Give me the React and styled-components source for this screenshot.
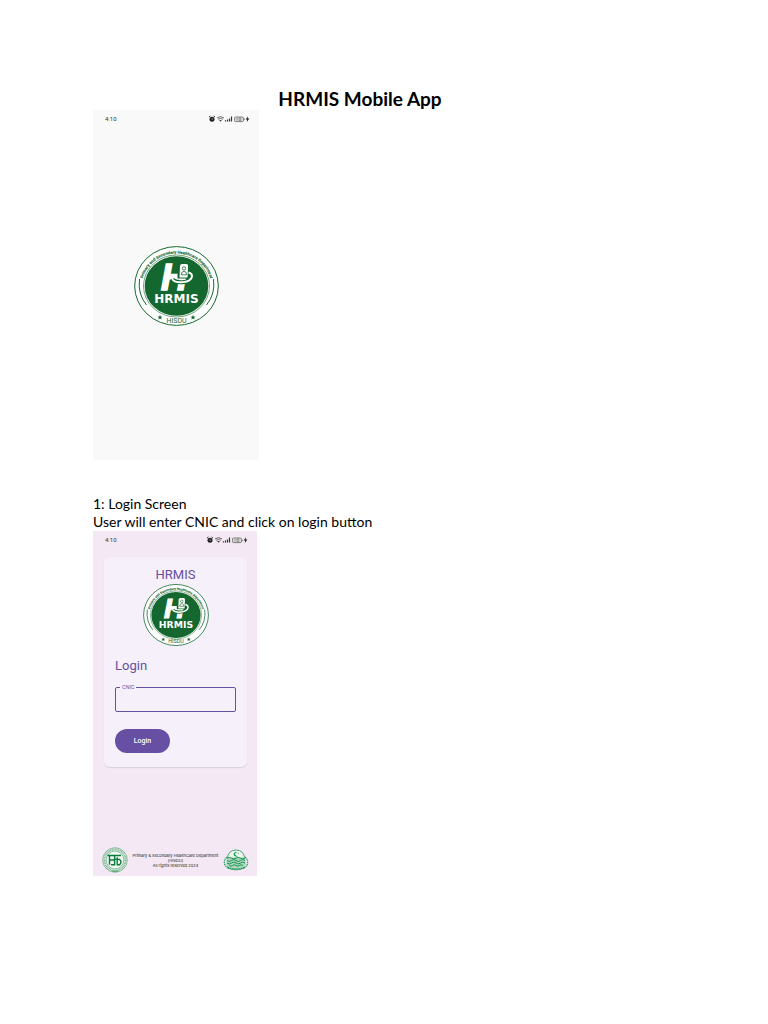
import React from 'react';
import styled, { createGlobalStyle } from 'styled-components';

const GlobalStyle = createGlobalStyle`
  * { box-sizing: border-box; }
  body { margin: 0; background: #fff; color: #000; font-family: Lato, "Open Sans", sans-serif; }
`;

const Page = styled.main`
  padding: 87px 48px 87px 93px;
`;

const Title = styled.h1`
  margin: 0;
  padding-right: 93px;
  font-size: 19px;
  line-height: 23px;
  font-weight: 700;
  text-align: center;
`;

const Section = styled.section`
  padding-top: 35px;
`;

const Line = styled.p`
  margin: 0;
  font-size: 14px;
  line-height: 18px;
  font-weight: 400;
`;

const Phone = styled.div`
  display: flex;
  flex-direction: column;
  width: ${(p) => p.$width}px;
  aspect-ratio: ${(p) => p.$ratio};
  background: ${(p) => p.$background};
  font-family: Roboto, sans-serif;
`;

const Bar = styled.div`
  display: flex;
  align-items: center;
  justify-content: space-between;
  height: 18px;
  padding: 0 9px 0 12px;
  font-size: 6px;
  line-height: 8px;
  color: #333;
`;

const Splash = styled.div`
  flex: 1;
  display: flex;
  align-items: center;
  justify-content: center;
  padding-bottom: 16px;
`;

const Card = styled.form`
  display: flex;
  flex-direction: column;
  align-items: flex-start;
  margin: 8px 10px 0 11px;
  padding: 10px 11px 14px;
  border-radius: 6px;
  background: #f5f0f9;
  box-shadow: 0 1px 1px #d8cfdf;
`;

const CardTitle = styled.h2`
  align-self: center;
  margin: 0;
  font-size: 13px;
  line-height: 16px;
  font-weight: 400;
  color: #674fa3;
`;

const EmblemSlot = styled.div`
  align-self: center;
  display: flex;
  padding: 1px 0 12px;
`;

const FormTitle = styled.h3`
  margin: 0 0 10px;
  font-size: 13px;
  line-height: 16px;
  font-weight: 400;
  color: #674fa3;
`;

const Field = styled.fieldset`
  align-self: stretch;
  min-width: 0;
  height: 28px;
  margin: 0;
  padding: 0 4px;
  border: 1px solid #674fa3;
  border-radius: 2px;
`;

const Legend = styled.legend`
  padding: 0 2px;
  font-family: Inter, sans-serif;
  font-size: 5px;
  line-height: 6px;
  color: #674fa3;
`;

const Input = styled.input`
  display: block;
  width: 100%;
  height: 16px;
  padding: 0;
  border: 0;
  outline: 0;
  background: transparent;
  font: 8px Roboto, sans-serif;
`;

const LoginButton = styled.button`
  width: 55px;
  height: 24px;
  margin-top: 17px;
  padding: 0;
  border: 0;
  border-radius: 12px;
  background: #674fa3;
  color: #fff;
  font: 500 7px Roboto, sans-serif;
`;

const Footer = styled.footer`
  display: flex;
  align-items: center;
  justify-content: space-between;
  margin-top: auto;
  padding: 0 8px 3px 9px;
`;

const Copyright = styled.p`
  margin: 0;
  font-family: Inter, sans-serif;
  font-size: 4px;
  line-height: 5px;
  text-align: center;
  white-space: nowrap;
  color: #222;
`;

const Drawing = styled.svg`
  display: block;
  flex: none;
`;

const GREEN = '#14682f';

function StatusIcons() {
  return (
    <Drawing width="42" height="8" viewBox="0 0 42 8" aria-hidden="true">
      <circle cx="4" cy="4.2" r="2.5" fill="#222" />
      <path d="M1 2.2 2.4 1M7 2.2 5.6 1" stroke="#222" strokeWidth="1" />
      <path d="M4 3v1.4h1" stroke="#bbb" strokeWidth=".5" fill="none" />
      <path d="M9 3q3.5-2.8 7 0M10.2 4.3q2.3-1.8 4.6 0" stroke="#444" strokeWidth=".8" fill="none" />
      <path d="M11.2 5.1h2.6l-1.3 1.6z" fill="#333" />
      <path d="M17.5 6.5v-1.2M19.5 6.5v-2M21.5 6.5V3.5M23.5 6.5v-5" stroke="#333" strokeWidth="1.2" />
      <rect x="26.5" y="2" width="9" height="4.6" rx="1.2" fill="#ddd" stroke="#555" strokeWidth=".7" />
      <path d="M29 3v2.6M31 3h1.8v2.6H31zM36.5 3.5v1.6" stroke="#666" strokeWidth=".6" fill="none" />
      <path d="m40 1.2-2.4 3.2h1.5L38.8 7l2.6-3.4h-1.7z" fill="#222" />
    </Drawing>
  );
}

function StatusBar() {
  return (
    <Bar>
      <span>4:10</span>
      <StatusIcons />
    </Bar>
  );
}

function HrmisEmblem({ width, height, id }) {
  return (
    <Drawing width={width} height={height} viewBox="0 0 85 80" role="img" aria-label="HRMIS emblem">
      <defs>
        <path id={id} d="M8 40A34.5 32.5 0 0 1 77 40" />
      </defs>
      <ellipse cx="42.5" cy="40" rx="41.8" ry="39.4" fill="#fff" stroke={GREEN} strokeWidth="1" />
      <ellipse cx="42.5" cy="40" rx="33" ry="31" fill="none" stroke={GREEN} strokeWidth=".6" />
      <ellipse cx="42.5" cy="40" rx="31.8" ry="29.8" fill={GREEN} />
      <path d="M5.500 33Q3.500 48 12.500 59M79.500 33Q81.500 48 72.500 59" fill="none" stroke={GREEN} strokeWidth="1" />
      <text fontFamily='"Liberation Sans", sans-serif' fontWeight="700" fontSize="4" fill={GREEN} stroke={GREEN} strokeWidth=".15" textAnchor="middle">
        <textPath href={`#${id}`} startOffset="50%">Primary and Secondary Healthcare Department</textPath>
      </text>
      <text x="40" y="44" textAnchor="middle" fontFamily='"Liberation Sans", sans-serif' fontWeight="700" fontStyle="italic" fontSize="36" fill="#fff" stroke="#fff" strokeWidth="1.600">H</text>
      <path d="M43.500 16h15v16.500h-15z" fill={GREEN} />
      <path d="M46 20q.2-2 2.200-2h4q2 0 1.900 2l-.6 11.500h-8z" fill="#fff" />
      <circle cx="50" cy="22.400" r="1.700" fill="none" stroke={GREEN} strokeWidth=".8" />
      <path d="M47.200 28.800q0-3.400 2.800-3.400t2.600 3.400z" fill="none" stroke={GREEN} strokeWidth=".8" />
      <path d="M38 32.500C41 38 57 37.500 58 30.500 58.300 28 56.500 27 54.500 26.500" fill="none" stroke={GREEN} strokeWidth="4" />
      <path d="M42 30.500Q37.500 31 38.500 33.500C42 38 57 37 58 30.500 58.200 28 56.500 27 54.500 26.500" fill="none" stroke="#fff" strokeWidth="1.900" />
      <text x="42.5" y="57" textAnchor="middle" fontFamily='"DejaVu Sans", sans-serif' fontWeight="700" fontSize="12" fill="#fff">HRMIS</text>
      <text x="42.5" y="76.5" textAnchor="middle" fontFamily="Roboto, sans-serif" fontSize="7" fill={GREEN}>HISDU</text>
      <path d="m26 69 .7 1.6 1.7.1-1.3 1.1.5 1.7-1.6-1-1.6 1 .5-1.7-1.3-1.1 1.7-.1zM59 69l.7 1.6 1.7.1-1.3 1.1.5 1.7-1.6-1-1.6 1 .5-1.7-1.3-1.1 1.7-.1z" fill={GREEN} />
    </Drawing>
  );
}

function HisduSeal() {
  return (
    <Drawing width="26" height="26" viewBox="0 0 26 26" role="img" aria-label="HISDU seal">
      <circle cx="13" cy="13" r="12.3" fill="#e6f0e8" stroke="#4a9a6c" strokeWidth=".6" />
      <circle cx="13" cy="13" r="10.6" fill="none" stroke="#7cb895" strokeWidth="1.8" strokeDasharray="1 .6" />
      <circle cx="13" cy="13" r="8.9" fill="#f2f7f4" stroke="#4a9a6c" strokeWidth=".6" />
      <path d="M5.500 8.500H19M7.500 8.500v9.200M7.500 13h5M12.600 8.500v9.200H9M12.600 12.400h5q2.800 2.600 0 5.300h-2.400v-7.400" fill="none" stroke="#087b39" strokeWidth="1.400" />
      <path d="M10 24.200h6" stroke="#4a9a6c" strokeWidth="1" />
    </Drawing>
  );
}

function PunjabSeal() {
  return (
    <Drawing width="26" height="22" viewBox="0 0 26 22" role="img" aria-label="Punjab government seal">
      <path d="M4.2 10Q5 1 13 1t8.8 9" fill="#eaf3ed" stroke="#35a268" strokeWidth=".9" />
      <path d="M14.5 3.2a2.4 2.4 0 1 0 .8 3.2 1.9 1.9 0 1 1-.8-3.2z" fill="#189451" />
      <circle cx="15.2" cy="4.3" r=".5" fill="#189451" />
      <path d="M4 8.6h18l1 7.2q-4.4 4.4-10 4.4T3 15.8z" fill="#a9d8bd" />
      <path d="M4 9.2q2.2-1.4 4.5 0t4.5 0 4.5 0 4.5 0M4 11.5q2.2 2 4.5 0t4.5 0 4.5 0 4.5 0M4 14q2.2 2 4.5 0t4.5 0 4.5 0 4.5 0M6 16.5q1.7 1.5 3.5 0t3.5 0 3.5 0 3.5 0" fill="none" stroke="#199250" strokeWidth="1" />
      <path d="M4 8Q-.5 12 2.5 17l3.3 2.3M22 8q4.500 4 1.500 9l-3.300 2.300" fill="none" stroke="#35a268" strokeWidth="1.3" strokeDasharray="1.4 .5" />
      <path d="M4.500 18.500Q13 22.300 21.500 18.500" fill="none" stroke="#199250" strokeWidth="1.800" strokeDasharray="1.500 .5" />
    </Drawing>
  );
}

export default function App() {
  return (
    <>
      <GlobalStyle />
      <Page>
        <Title>HRMIS Mobile App</Title>
        <Phone $width={166} $ratio="166 / 350" $background="#f9f9f9">
          <StatusBar />
          <Splash>
            <HrmisEmblem width={85} height={80} id="splash-arc" />
          </Splash>
        </Phone>
        <Section>
          <Line as="h2">1: Login Screen</Line>
          <Line>User will enter CNIC and click on login button</Line>
          <Phone $width={164} $ratio="164 / 345" $background="#f3e8f3">
            <StatusBar />
            <Card onSubmit={(e) => e.preventDefault()}>
              <CardTitle>HRMIS</CardTitle>
              <EmblemSlot>
                <HrmisEmblem width={66} height={62} id="login-arc" />
              </EmblemSlot>
              <FormTitle>Login</FormTitle>
              <Field>
                <Legend>
                  <label htmlFor="cnic">CNIC</label>
                </Legend>
                <Input id="cnic" type="text" />
              </Field>
              <LoginButton type="submit">Login</LoginButton>
            </Card>
            <Footer>
              <HisduSeal />
              <Copyright>
                Primary &amp; Secondary HealthCare Department
                <br />
                (HISDU)
                <br />
                All rights reserved 2024
              </Copyright>
              <PunjabSeal />
            </Footer>
          </Phone>
        </Section>
      </Page>
    </>
  );
}
